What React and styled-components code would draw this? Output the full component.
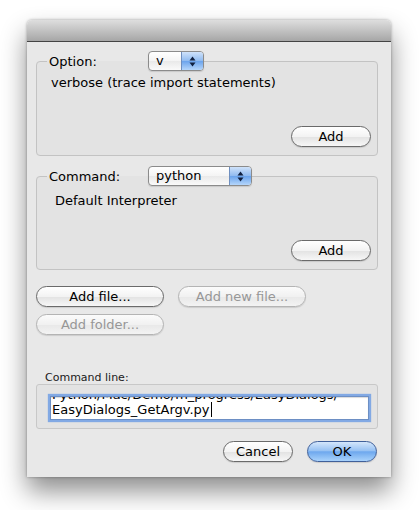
import React from 'react';
import styled, { createGlobalStyle } from 'styled-components';

const GlobalStyle = createGlobalStyle`
	html, body {
		margin: 0;
		background: #ffffff;
	}
	body {
		font-family: "DejaVu Sans", "Liberation Sans", sans-serif;
		font-size: 13px;
		color: #000000;
	}
`;

const Page = styled.div`
	width: 420px;
	height: 510px;
	padding: 20px 29px 0 27px;
	box-sizing: border-box;
`;

const Window = styled.div`
	width: 364px;
	border-radius: 5px 5px 0 0;
	box-shadow: 0 14px 26px rgba(0, 0, 0, 0.45), 0 0 3px rgba(0, 0, 0, 0.35);
	overflow: hidden;
`;

const TitleBar = styled.div`
	height: 21px;
	background: linear-gradient(#dedede, #a6a6a6);
	border-bottom: 1px solid #444444;
`;

const Body = styled.div`
	background: #e8e8e8;
	padding: 9px 13px 15px 9px;
	display: flex;
	flex-direction: column;
`;

const Group = styled.fieldset`
	margin: 0 0 ${p => p.$gap || 0}px 0;
	padding: 0 6px 8px 10px;
	border: 1px solid #c3c3c3;
	border-radius: 4px;
	background: #e3e3e3;
	display: flex;
	flex-direction: column;
	min-width: 0;
`;

const Legend = styled.legend`
	padding: 0 0 0 2px;
	display: flex;
	align-items: center;
	height: 20px;
`;

const LegendLabel = styled.span`
	width: 99px;
`;

const Popup = styled.div`
	width: ${p => p.$width}px;
	height: 18px;
	border: 1px solid #8b8b8b;
	border-radius: 4px;
	display: flex;
	overflow: hidden;
	background: linear-gradient(#ffffff, #f4f4f4 50%, #e9e9e9 51%, #fafafa);
	box-shadow: 0 1px 1px rgba(0, 0, 0, 0.12);
`;

const PopupValue = styled.span`
	flex: 1;
	padding-left: 7px;
	line-height: 18px;
`;

const PopupArrows = styled.span`
	width: 21px;
	border-left: 1px solid #6f8fbf;
	background: linear-gradient(#cfe2fa, #8fbaf0 50%, #6aa3ec 51%, #b5d6fb);
	display: flex;
	align-items: center;
	justify-content: center;
`;

const GroupText = styled.div`
	margin-top: ${p => p.$top}px;
	padding-left: ${p => p.$indent}px;
	line-height: 16px;
`;

const RightRow = styled.div`
	display: flex;
	justify-content: flex-end;
	margin-top: auto;
`;

const GroupInner = styled.div`
	display: flex;
	flex-direction: column;
	height: ${p => p.$height}px;
`;

const AquaButton = styled.button`
	width: ${p => p.$width}px;
	height: 21px;
	border-radius: 11px;
	border: 1px solid ${p => (p.disabled ? '#b4b4b4' : p.$primary ? '#40609a' : '#6a6a6a')};
	background: ${p =>
		p.$primary
			? 'linear-gradient(#d4e6fb, #98c2f3 45%, #6ea8ee 52%, #a9d2fb)'
			: p.disabled
			? 'linear-gradient(#fbfbfb, #f1f1f1 50%, #e8e8e8 51%, #f3f3f3)'
			: 'linear-gradient(#ffffff, #f3f3f3 50%, #e2e2e2 51%, #f7f7f7)'};
	color: ${p => (p.disabled ? '#979797' : '#000000')};
	font-family: "DejaVu Sans", "Liberation Sans", sans-serif;
	font-size: 13px;
	padding: 0;
	line-height: 19px;
	box-shadow: 0 1px 1px rgba(0, 0, 0, 0.12);
`;

const ButtonGrid = styled.div`
	display: grid;
	grid-template-columns: 128px 128px;
	column-gap: 14px;
	row-gap: 7px;
	margin-top: 16px;
`;

const SmallLabel = styled.div`
	font-size: 11px;
	line-height: 13px;
	margin: 36px 0 0 9px;
	color: #1a1a1a;
`;

const FieldBox = styled.div`
	height: 45px;
	box-sizing: border-box;
	border: 1px solid #c8c8c8;
	border-radius: 3px;
	background: #e3e3e3;
	padding: 11px 8px 0 13px;
`;

const TextField = styled.div`
	height: 24px;
	background: #ffffff;
	border: 1px solid #6d8fc4;
	box-shadow: 0 0 1px 2px rgba(98, 150, 228, 0.75), inset 0 1px 1px rgba(0, 0, 0, 0.15);
	overflow: hidden;
	display: flex;
	flex-direction: column;
	justify-content: flex-end;
	padding: 0 3px 2px 1px;
	box-sizing: border-box;
`;

const FieldLine = styled.div`
	line-height: 15px;
	white-space: nowrap;
	flex-shrink: 0;
`;

const Caret = styled.span`
	display: inline-block;
	width: 1px;
	height: 15px;
	background: #000000;
	vertical-align: -3px;
	margin-left: 1px;
`;

const Footer = styled.div`
	display: flex;
	justify-content: flex-end;
	gap: 14px;
	margin-top: 12px;
	padding-right: 1px;
`;

const Arrows = () => (
	<svg width="7" height="11" viewBox="0 0 7 11">
		<path d="M3.5 0.5 L6.5 4.5 L0.5 4.5 Z" fill="#102040" />
		<path d="M3.5 10.5 L6.5 6.5 L0.5 6.5 Z" fill="#102040" />
	</svg>
);

const PopupButton = ({ value, width }) => (
	<Popup $width={width}>
		<PopupValue>{value}</PopupValue>
		<PopupArrows>
			<Arrows />
		</PopupArrows>
	</Popup>
);

export default function App() {
	return (
		<Page>
			<GlobalStyle />
			<Window>
				<TitleBar />
				<Body>
					<Group $gap={10}>
						<Legend>
							<LegendLabel>Option:</LegendLabel>
							<PopupButton value="v" width={54} />
						</Legend>
						<GroupInner $height={76}>
							<GroupText $top={4} $indent={4}>verbose (trace import statements)</GroupText>
							<RightRow>
								<AquaButton $width={80}>Add</AquaButton>
							</RightRow>
						</GroupInner>
					</Group>
					<Group>
						<Legend>
							<LegendLabel>Command:</LegendLabel>
							<PopupButton value="python" width={102} />
						</Legend>
						<GroupInner $height={75}>
							<GroupText $top={7} $indent={8}>Default Interpreter</GroupText>
							<RightRow>
								<AquaButton $width={80}>Add</AquaButton>
							</RightRow>
						</GroupInner>
					</Group>
					<ButtonGrid>
						<AquaButton $width={128}>Add file...</AquaButton>
						<AquaButton $width={128} disabled>Add new file...</AquaButton>
						<AquaButton $width={128} disabled>Add folder...</AquaButton>
					</ButtonGrid>
					<SmallLabel>Command line:</SmallLabel>
					<FieldBox>
						<TextField>
							<FieldLine>Python/Mac/Demo/m_progress/EasyDialogs/</FieldLine>
							<FieldLine>
								EasyDialogs_GetArgv.py<Caret />
							</FieldLine>
						</TextField>
					</FieldBox>
					<Footer>
						<AquaButton $width={70}>Cancel</AquaButton>
						<AquaButton $width={70} $primary>OK</AquaButton>
					</Footer>
				</Body>
			</Window>
		</Page>
	);
}
